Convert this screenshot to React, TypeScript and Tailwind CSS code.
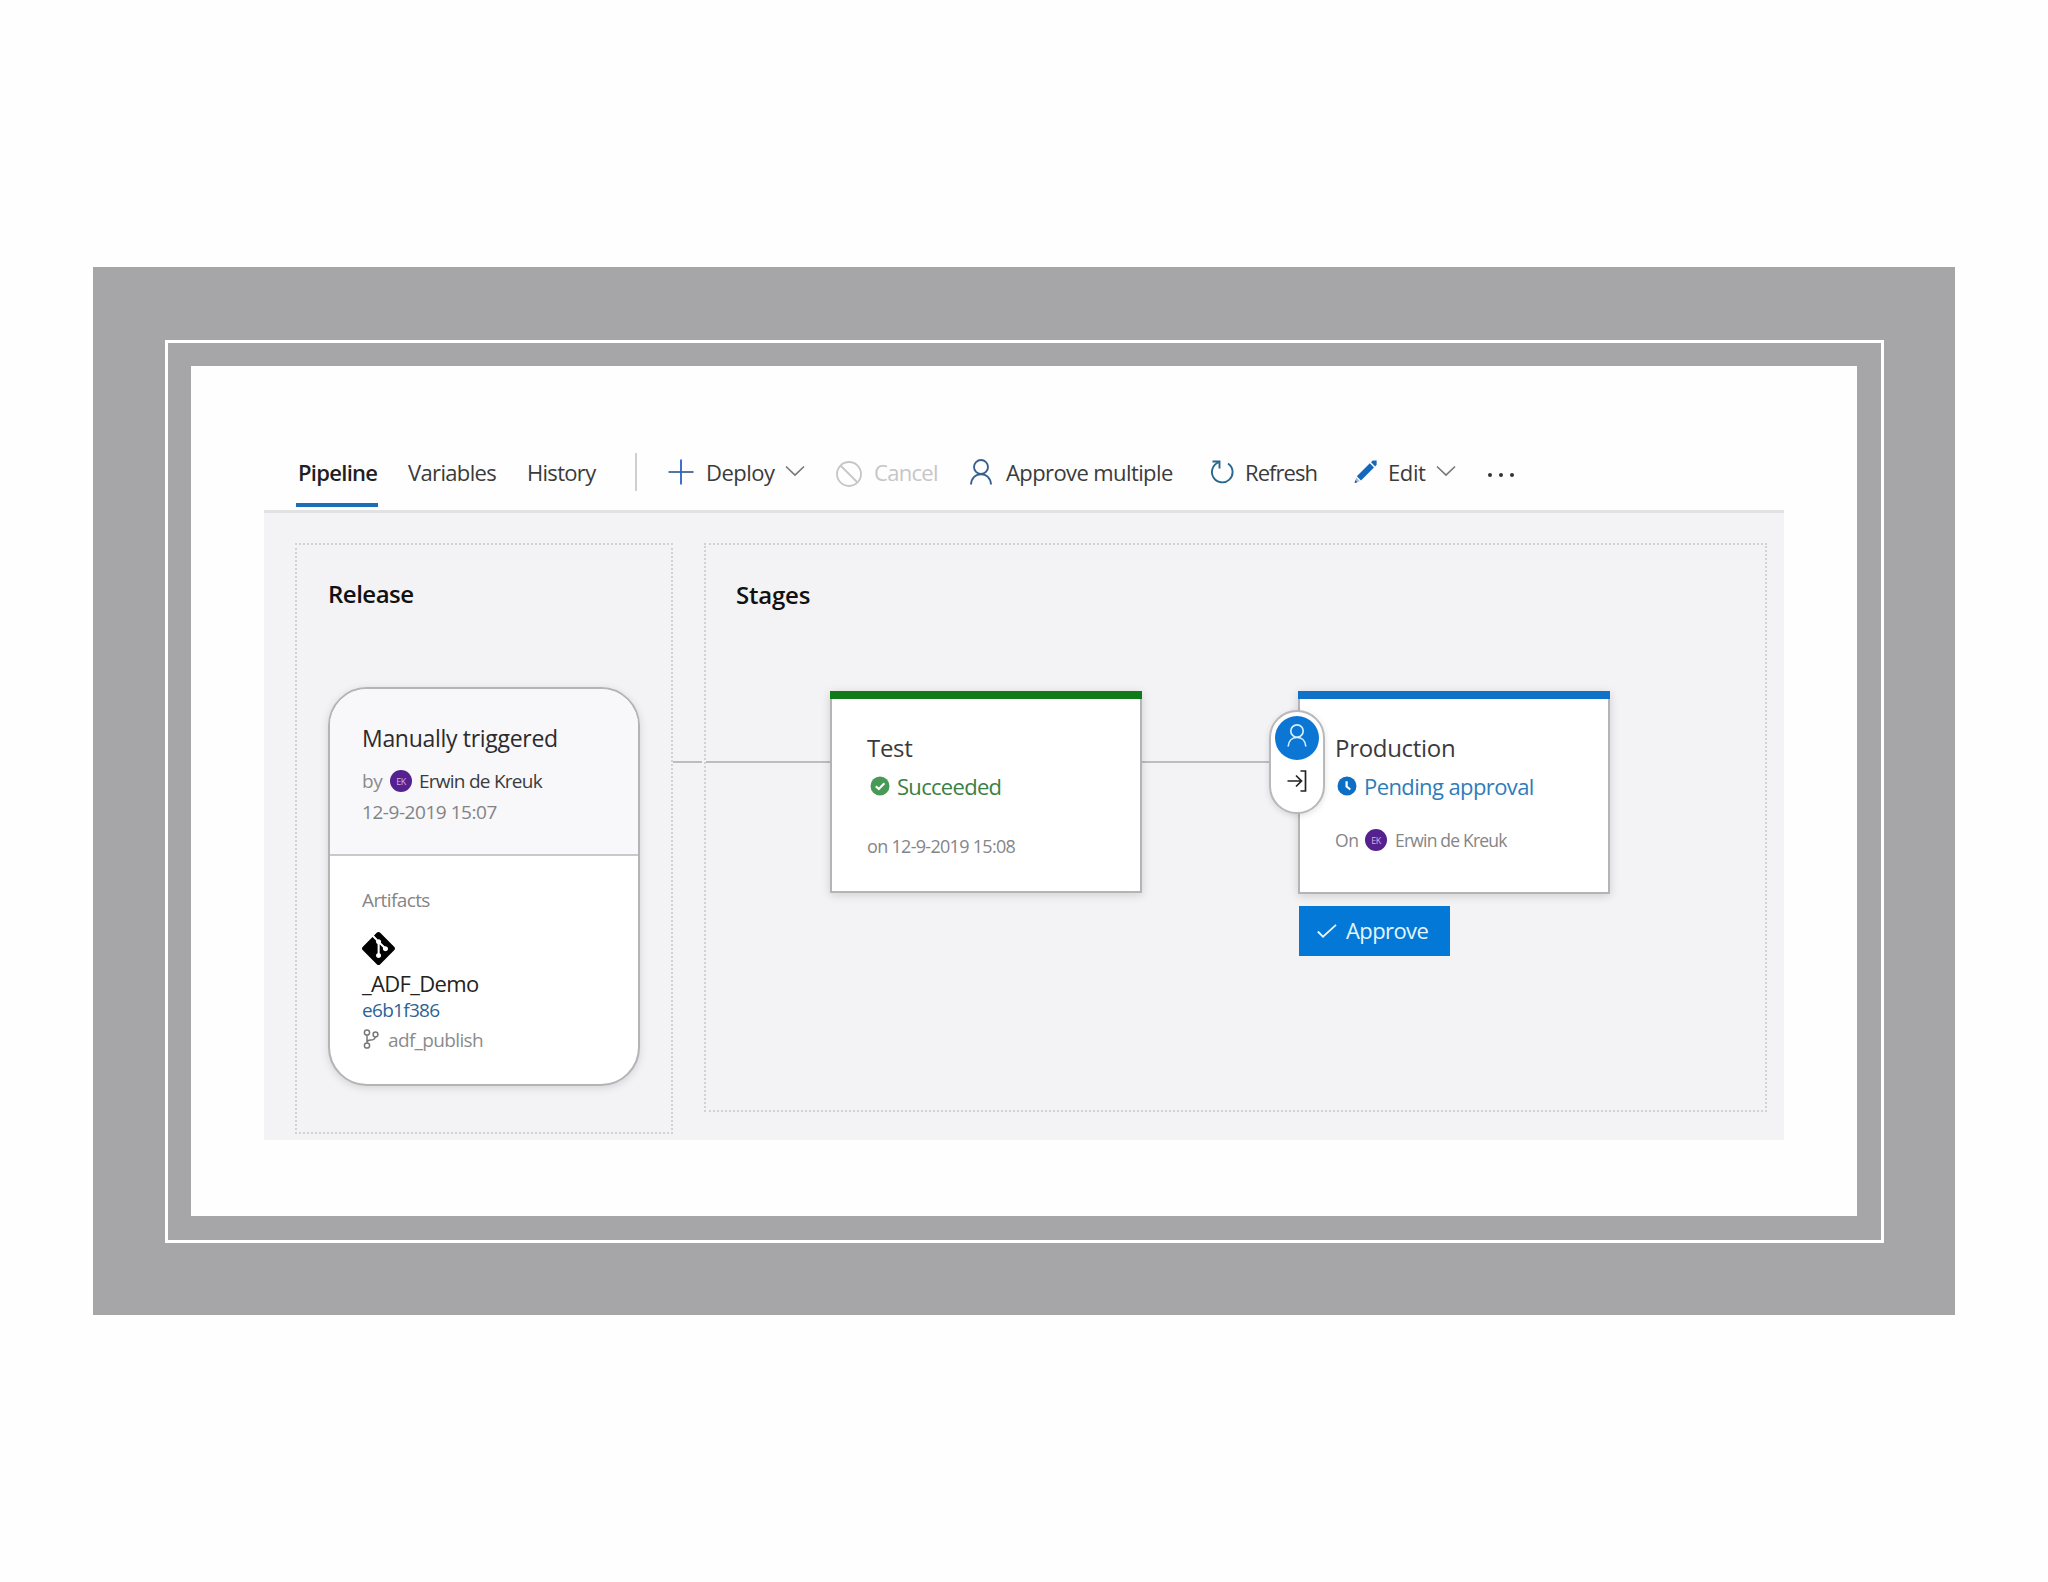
import type { ReactNode } from 'react'
import { SiGit } from 'react-icons/si'

function PersonIcon({ className }: { className: string }) {
  return (
    <svg viewBox="0 0 22 26" fill="none" stroke="currentColor" strokeWidth="1.9" className={className}>
      <circle cx="11" cy="8" r="7" />
      <path d="M1 25.500C1.400 19 5.600 15.200 11 15.200S20.600 19 21 25.500" />
    </svg>
  )
}

function Chevron() {
  return (
    <svg viewBox="0 0 20 12" fill="none" stroke="currentColor" strokeWidth="1.6" className="w-5 h-3 -mt-0.5 text-[#777]">
      <path d="M1 1.500L10 10.200L19 1.500" />
    </svg>
  )
}

function Avatar() {
  return (
    <span className="flex items-center justify-center w-[22px] h-[22px] rounded-full bg-[#55218f] text-[9px] leading-none text-[#c9b3e6] tracking-[-0.5px]">EK</span>
  )
}

function Action({ width, pad, icon, children }: { width: string; pad: string; icon: ReactNode; children: ReactNode }) {
  return (
    <div className={`flex items-center shrink-0 ${width}`}>
      <span className={`flex items-center shrink-0 ${pad}`}>{icon}</span>
      {children}
    </div>
  )
}

function Toolbar() {
  return (
    <div className="flex items-start h-[74px] text-[22px] leading-[32px] text-[#3b3b3b] whitespace-nowrap">
      <div className="w-[82px] h-[71px] ml-8 shrink-0 pl-0.5 pt-5 border-b-4 border-[#1a6fb8] font-semibold text-[#1f1f24] tracking-[-0.7px]">Pipeline</div>
      <div className="w-[118px] pl-[30px] pt-5 shrink-0 tracking-[-0.65px]">Variables</div>
      <div className="w-[139px] pl-[31px] pt-5 shrink-0 tracking-[-0.7px]">History</div>
      <div className="w-0.5 h-[38px] mt-[17px] mr-[31px] bg-[#cfcfcf] shrink-0" />
      <div className="flex items-center pt-5 h-[52px]">
        <Action
          width="w-[168px]"
          pad="w-[38px]"
          icon={
            <svg viewBox="0 0 26 26" fill="none" strokeWidth="1.800" className="w-[26px] h-[26px]">
              <path d="M0.500 13H25.500" stroke="#45659a" />
              <path d="M13 0.500V25.500" stroke="#2a62c4" />
            </svg>
          }
        >
          <span className="w-[79px] tracking-[-0.5px]">Deploy</span>
          <Chevron />
        </Action>
        <Action
          width="w-[134px] text-[#c6c6c6]"
          pad="w-[38px]"
          icon={
            <svg viewBox="0 0 26 26" fill="none" stroke="currentColor" strokeWidth="1.800" className="w-[26px] h-[26px] mt-[3px]">
              <circle cx="13" cy="13" r="12" />
              <path d="M4.500 4.500L21.500 21.500" />
            </svg>
          }
        >
          <span className="tracking-[-0.7px]">Cancel</span>
        </Action>
        <Action width="w-[241px]" pad="w-[36px]" icon={<PersonIcon className="w-[22px] h-[26px] text-[#38608f]" />}>
          <span className="tracking-[-0.6px]">Approve multiple</span>
        </Action>
        <Action
          width="w-[143px]"
          pad="w-[34px]"
          icon={
            <svg viewBox="0 0 24 24" fill="none" stroke="#27688f" strokeWidth="1.900" className="w-6 h-6 -mt-px">
              <path d="M1.500 1.500H8.500V8.500" />
              <path d="M8.300 2.200A10.300 10.300 0 1 0 17 3.500" />
            </svg>
          }
        >
          <span className="tracking-[-0.95px]">Refresh</span>
        </Action>
        <Action
          width="w-[133px]"
          pad="w-[34px]"
          icon={
            <svg viewBox="0 0 24 24" className="w-6 h-6">
              <path d="M2.800 16.300L15.800 3.300L20 7.500L7 20.500Z" fill="#1467bd" />
              <path d="M17 2.200L18.800 0.600H22.600V4.600L21.200 6.400Z" fill="#1467bd" />
              <path d="M2.200 17.600L5.800 21.200L1 22.600Z" fill="#9fb4dc" />
              <path d="M1.300 20.200L3.300 22.200L0.600 23Z" fill="#2b3b5c" />
            </svg>
          }
        >
          <span className="w-[48px] tracking-[-0.4px]">Edit</span>
          <Chevron />
        </Action>
        <svg viewBox="0 0 28 6" className="w-7 h-1.5 mt-1.5" fill="#333">
          <circle cx="3" cy="3" r="2" />
          <circle cx="14" cy="3" r="2" />
          <circle cx="25" cy="3" r="2" />
        </svg>
      </div>
    </div>
  )
}

function ReleaseCard() {
  return (
    <div className="w-[312px] h-[399px] rounded-[39px] border-2 border-[#b4b3b6] bg-white overflow-hidden shadow-[0_2px_9px_rgba(0,0,0,0.13)] whitespace-nowrap">
      <div className="h-[167px] pt-[33px] pl-8 bg-[#f8f7fa] border-b-2 border-[#c9c8cb]">
        <div className="text-[23px] leading-[32px] text-[#2b2b2e] tracking-[-0.3px]">Manually triggered</div>
        <div className="flex items-center mt-[13px] text-[19px] leading-[28px] text-[#3b3b3d]">
          <span className="w-[28px] text-[#8b8b8d] tracking-[-0.3px]">by</span>
          <Avatar />
          <span className="ml-[7px] tracking-[-0.75px]">Erwin de Kreuk</span>
        </div>
        <div className="mt-[3px] text-[19px] leading-[28px] text-[#828385] tracking-[-0.45px]">12-9-2019 15:07</div>
      </div>
      <div className="pt-[30px] pl-8">
        <div className="text-[19px] leading-[28px] text-[#858585] tracking-[-0.6px]">Artifacts</div>
        <SiGit className="w-[33px] h-[33px] mt-[18px] text-black" />
        <div className="mt-1 text-[22px] leading-[28px] text-[#222] tracking-[-0.65px]">_ADF_Demo</div>
        <div className="mt-px text-[19px] leading-[24px] text-[#2d6396] tracking-[-0.7px]">e6b1f386</div>
        <div className="flex items-center mt-1 text-[19px] leading-[28px] text-[#8b8b8d]">
          <svg viewBox="0 0 16 20" fill="none" stroke="#77777a" strokeWidth="1.500" className="w-4 h-5 ml-px mr-[9px] -mt-0.5">
            <circle cx="4" cy="3.500" r="2.600" />
            <circle cx="4" cy="16.500" r="2.600" />
            <circle cx="12.500" cy="5.500" r="2.400" />
            <path d="M4 6.200V13.800M12.300 8C12 10.500 10 11 7.500 11S4.200 11.800 4 13.500" />
          </svg>
          <span className="tracking-[-0.65px]">adf_publish</span>
        </div>
      </div>
    </div>
  )
}

function StageCard({ bar, height, children }: { bar: string; height: string; children: ReactNode }) {
  return (
    <div className={`relative flex flex-col w-[312px] bg-white shadow-[0_2px_9px_rgba(0,0,0,0.15)] whitespace-nowrap ${height}`}>
      <div className={`h-2 ${bar}`} />
      <div className="flex-1 border-2 border-t-0 border-[#b4b3b6] pl-[35px] pt-[33px]">{children}</div>
    </div>
  )
}

export default function App() {
  return (
    <div className="w-[2048px] h-[1582px] bg-[#fefefe] pt-[267px] pl-[93px] overflow-hidden font-['Open_Sans','Noto_Sans',sans-serif]">
      <div className="w-[1862px] h-[1048px] bg-[#a6a5a7] pt-[73px] pl-[72px]">
        <div className="w-[1719px] h-[903px] border-3 border-white pt-[23px] pl-[23px]">
          <div className="w-[1666px] h-[850px] bg-[#fefefe] pt-[70px] pl-[73px]">
            <div className="w-[1520px] h-[704px]">
              <Toolbar />
              <div className="flex items-start h-[630px] bg-[#f3f2f5] border-t-3 border-[#e2e1e3] pt-[30px] pl-[31px]">
                <section className="w-[378px] h-[591px] border-2 border-dotted border-[#d2d1d4] pl-[31px] pt-[33px]">
                  <h2 className="h-[109px] text-[24px] leading-[32px] font-semibold text-[#111] tracking-[-0.5px]">Release</h2>
                  <ReleaseCard />
                </section>
                <div className="w-[29px] h-0.5 mt-[218px] mr-0.5 bg-[#bdbcc0]" />
                <section className="w-[1063px] h-[569px] border-2 border-dotted border-[#d2d1d4] pt-[34px]">
                  <h2 className="h-[112px] pl-[30px] text-[24px] leading-[32px] font-semibold text-[#111] tracking-[-0.2px]">Stages</h2>
                  <div className="flex items-start">
                    <div className="w-[124px] h-0.5 mt-[70px] bg-[#bdbcc0]" />
                    <StageCard bar="bg-[#10791a]" height="h-[202px]">
                      <div className="text-[24px] leading-[32px] text-[#3a3a3c] tracking-[-0.3px]">Test</div>
                      <div className="flex items-center mt-[6px] text-[22px] leading-[32px] text-[#3b7f45]">
                        <svg viewBox="0 0 20 20" className="w-5 h-5 ml-[3px] mr-[7px]">
                          <circle cx="10" cy="10" r="9.500" fill="#479a55" />
                          <path d="M5.800 10.200L8.800 13L14.400 7.300" fill="none" stroke="#fff" strokeWidth="2.200" />
                        </svg>
                        <span className="tracking-[-0.7px]">Succeeded</span>
                      </div>
                      <div className="mt-[30px] text-[18px] leading-[28px] text-[#858587] tracking-[-0.7px]">on 12-9-2019 15:08</div>
                    </StageCard>
                    <div className="w-[156px] h-0.5 mt-[70px] bg-[#bdbcc0]" />
                    <div>
                      <StageCard bar="bg-[#0f71c8]" height="h-[203px]">
                        <div className="text-[24px] leading-[32px] text-[#3a3a3c] tracking-[-0.3px]">Production</div>
                        <div className="flex items-center mt-[6px] text-[22px] leading-[32px] text-[#2f7cba]">
                          <svg viewBox="0 0 20 20" className="w-5 h-5 ml-0.5 mr-[7px]">
                            <circle cx="10" cy="10" r="9.500" fill="#0d6fc4" />
                            <path d="M9.600 5.300V10.500L13.300 13.500" fill="none" stroke="#fff" strokeWidth="2.200" />
                          </svg>
                          <span className="tracking-[-0.6px]">Pending approval</span>
                        </div>
                        <div className="flex items-center mt-6 text-[17.5px] leading-[28px] text-[#858587]">
                          <span className="w-[30px] tracking-[-0.3px]">On</span>
                          <Avatar />
                          <span className="ml-2 tracking-[-0.8px]">Erwin de Kreuk</span>
                        </div>
                        {/* pre-deployment conditions, sits over the card's left edge */}
                        <div className="absolute -left-[29px] top-[19px] w-[56px] h-[104px] rounded-full border-2 border-[#b9b8ba] bg-white flex flex-col items-center pt-1 shadow-[0_2px_6px_rgba(0,0,0,0.12)]">
                          <div className="flex items-center justify-center w-11 h-11 shrink-0 rounded-full bg-[#0b76d4]">
                            <PersonIcon className="w-[20px] h-[23px] -mt-1.5 text-[#d5f0fb]" />
                          </div>
                          <svg viewBox="0 0 20 22" fill="none" stroke="#222" strokeWidth="1.700" className="w-5 h-[22px] mt-[10px]">
                            <path d="M0.500 11H14.500M9 5.500L14.500 11L9 16.500M13.500 1H18.500V21H13.500" />
                          </svg>
                        </div>
                      </StageCard>
                      <button className="flex items-center w-[151px] h-[50px] mt-3 ml-px bg-[#0478d6] text-[#e4f6fe] text-[22px] leading-[32px] whitespace-nowrap pl-[18px] pb-0.5">
                        <svg viewBox="0 0 20 14" fill="none" stroke="currentColor" strokeWidth="1.800" className="w-5 h-3.5 mr-[9px] mt-0.5">
                          <path d="M0.800 7.500L6 12.700L19 0.800" />
                        </svg>
                        <span className="tracking-[-0.6px]">Approve</span>
                      </button>
                    </div>
                  </div>
                </section>
              </div>
            </div>
          </div>
        </div>
      </div>
    </div>
  )
}
